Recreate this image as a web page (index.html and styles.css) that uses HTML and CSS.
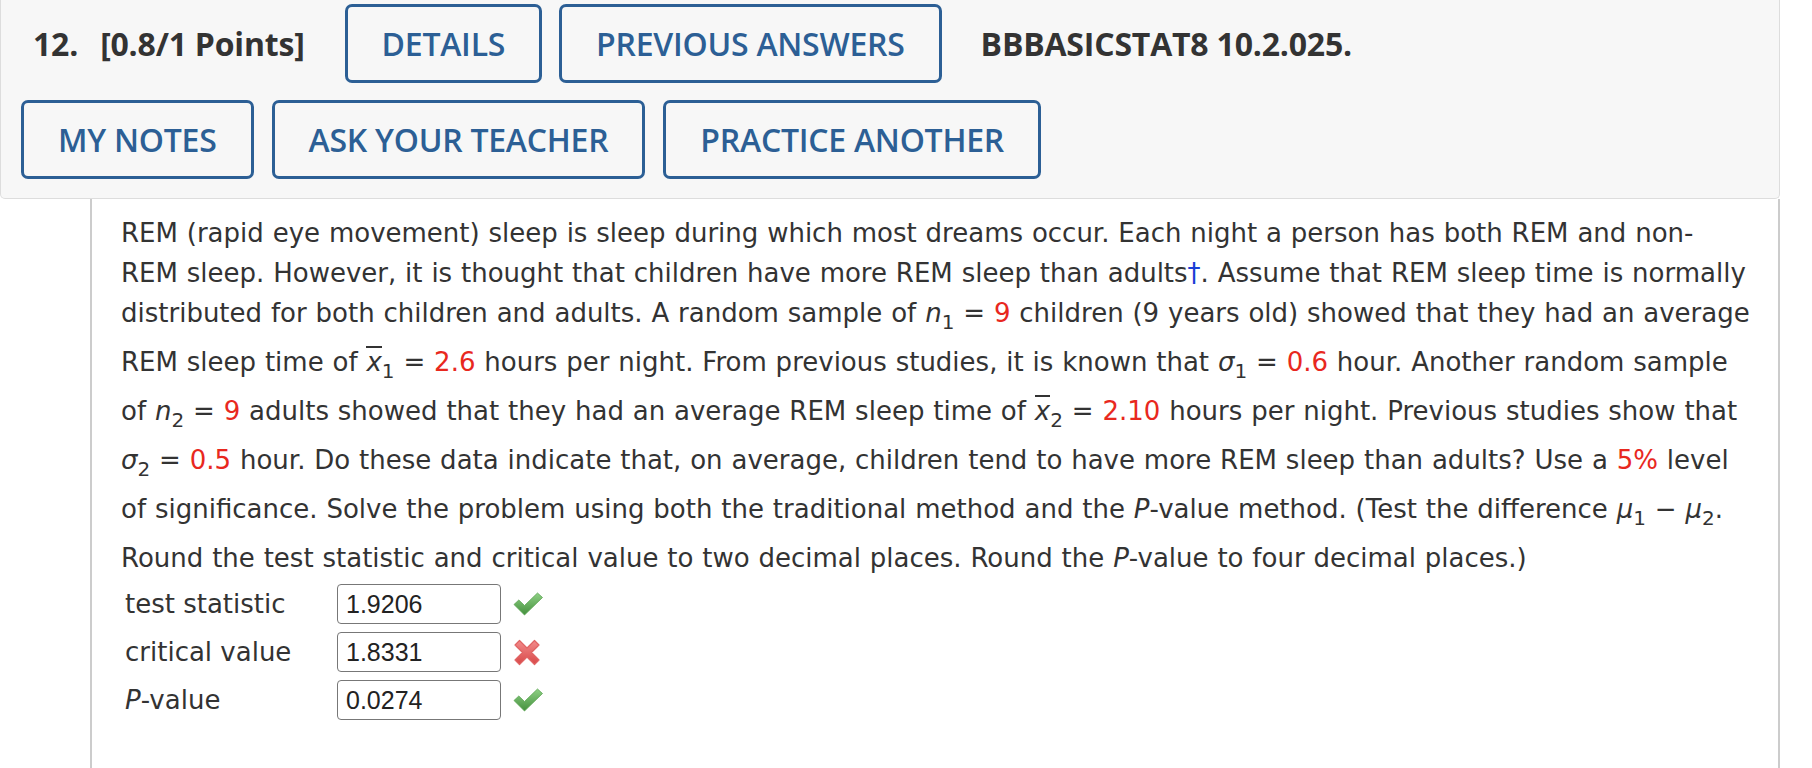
FILE: index.html
```html
<!DOCTYPE html>
<html>
<head>
<meta charset="utf-8">
<link rel="stylesheet" href="styles.css">
</head>
<body>
<div class="header">
  <div class="hrow first">
    <span class="qnum">12.</span>
    <span class="pts">[0.8/1 Points]</span>
    <button class="btn">DETAILS</button>
    <button class="btn">PREVIOUS ANSWERS</button>
    <span class="ref">BBBASICSTAT8 10.2.025.</span>
  </div>
  <div class="hrow">
    <button class="btn">MY NOTES</button>
    <button class="btn">ASK YOUR TEACHER</button>
    <button class="btn">PRACTICE ANOTHER</button>
  </div>
</div>
<div class="content">
  <p class="question">REM (rapid eye movement) sleep is sleep during which most dreams occur. Each night a person has both REM and non-<br>REM sleep. However, it is thought that children have more REM sleep than adults<span class="dagger">†</span>. Assume that REM sleep time is normally<br>distributed for both children and adults. A random sample of <span class="m"><i>n</i><sub>1</sub></span> = <span class="red">9</span> children (9 years old) showed that they had an average<br>REM sleep time of <span class="m"><span class="bar"><i>x</i></span><sub>1</sub></span> = <span class="red">2.6</span> hours per night. From previous studies, it is known that <span class="m"><i>σ</i><sub>1</sub></span> = <span class="red">0.6</span> hour. Another random sample<br>of <span class="m"><i>n</i><sub>2</sub></span> = <span class="red">9</span> adults showed that they had an average REM sleep time of <span class="m"><span class="bar"><i>x</i></span><sub>2</sub></span> = <span class="red">2.10</span> hours per night. Previous studies show that<br><span class="m"><i>σ</i><sub>2</sub></span> = <span class="red">0.5</span> hour. Do these data indicate that, on average, children tend to have more REM sleep than adults? Use a <span class="red">5%</span> level<br>of significance. Solve the problem using both the traditional method and the <i>P</i>-value method. (Test the difference <span class="m"><i>μ</i><sub>1</sub> − <i>μ</i><sub>2</sub></span>.<br>Round the test statistic and critical value to two decimal places. Round the <i>P</i>-value to four decimal places.)</p>
  <div class="answers">
    <span class="lbl">test statistic</span>
    <span class="field">1.9206</span>
    <svg class="icon" width="30" height="24" viewBox="0 0 30 24"><defs><linearGradient id="g1" x1="0" y1="0" x2="0" y2="1"><stop offset="0" stop-color="#8fd085"/><stop offset="1" stop-color="#44903d"/></linearGradient></defs><path d="M1 12.5 L5.8 8 L11.5 13.5 L24.5 1 L29.5 5.5 L11.5 23 Z" fill="url(#g1)" stroke="#5aa552" stroke-width="0.8" stroke-linejoin="round"/></svg>
    <span class="lbl">critical value</span>
    <span class="field">1.8331</span>
    <svg class="icon" width="30" height="27" viewBox="0 0 30 27"><defs><linearGradient id="g2" x1="0" y1="0" x2="0" y2="1"><stop offset="0" stop-color="#f28b8b"/><stop offset="1" stop-color="#d84848"/></linearGradient></defs><path d="M2 6 L6.5 1.5 L14 9 L21.5 1.5 L26 6 L18.5 13.5 L26 21 L21.5 25.5 L14 18 L6.5 25.5 L2 21 L9.5 13.5 Z" fill="url(#g2)" stroke="#e06464" stroke-width="1.2" stroke-linejoin="round"/></svg>
    <span class="lbl"><i>P</i>-value</span>
    <span class="field">0.0274</span>
    <svg class="icon" width="30" height="24" viewBox="0 0 30 24"><defs><linearGradient id="g3" x1="0" y1="0" x2="0" y2="1"><stop offset="0" stop-color="#8fd085"/><stop offset="1" stop-color="#44903d"/></linearGradient></defs><path d="M1 12.5 L5.8 8 L11.5 13.5 L24.5 1 L29.5 5.5 L11.5 23 Z" fill="url(#g3)" stroke="#5aa552" stroke-width="0.8" stroke-linejoin="round"/></svg>
  </div>
</div>
</body>
</html>
```
FILE: styles.css
```css
html, body {
  margin: 0;
  padding: 0;
  background: #ffffff;
}
body {
  width: 1780px;
  font-family: "DejaVu Sans", Verdana, sans-serif;
  color: #333333;
}
.header {
  background: #f7f7f7;
  border: 1px solid #dddddd;
  border-top: none;
  border-radius: 0 0 5px 5px;
  padding: 4px 20px 19px 20px;
  display: flex;
  flex-direction: column;
  gap: 17px;
}
.hrow {
  display: flex;
  align-items: center;
  gap: 18px;
  font-family: "Open Sans", sans-serif;
}
.hrow.first {
  padding-left: 12px;
  gap: 0;
}
.qnum, .pts, .ref {
  font-size: 32px;
  font-weight: 700;
  color: #333333;
  letter-spacing: -0.2px;
}
.qnum { margin-right: 22px; }
.pts { margin-right: 40px; }
.hrow.first .btn { margin-right: 17px; }
.ref { margin-left: 22px; }
.btn {
  font-family: "Open Sans", sans-serif;
  font-size: 32px;
  font-weight: 600;
  color: #2c5f95;
  background: transparent;
  border: 3px solid #2c5f95;
  border-radius: 7px;
  height: 79px;
  padding: 0 34px;
  letter-spacing: -0.25px;
  cursor: pointer;
}
.content {
  margin-left: 90px;
  border-left: 2px solid #cccccc;
  border-right: 2px solid #cccccc;
  padding: 14px 8px 60px 29px;
  min-height: 600px;
}
.question {
  margin: 0;
  font-size: 26px;
  line-height: 40px;
  letter-spacing: 0;
  word-spacing: 0.6px;
}
.red { color: #e8281e; }
.dagger { color: #1a3fd6; }
.m i { font-family: "DejaVu Sans", sans-serif; }
.m sub {
  display: inline-block;
  font-size: 20px;
  line-height: 20px;
  vertical-align: -7px;
  padding-bottom: 10px;
}
.bar {
  display: inline-block;
  border-top: 2px solid #333;
  line-height: 24px;
  padding-top: 2px;
}
.answers {
  display: grid;
  grid-template-columns: 212px 164px 42px;
  grid-auto-rows: 40px;
  row-gap: 8px;
  align-items: center;
  margin: 6px 0 0 4px;
}
.lbl {
  font-size: 26px;
}
.field {
  box-sizing: border-box;
  height: 40px;
  border: 1px solid #777777;
  border-radius: 4px;
  font-family: "Liberation Sans", Arial, sans-serif;
  font-size: 25px;
  line-height: 38px;
  padding-left: 8px;
  color: #222;
}
.icon {
  margin-left: 12px;
}
```
